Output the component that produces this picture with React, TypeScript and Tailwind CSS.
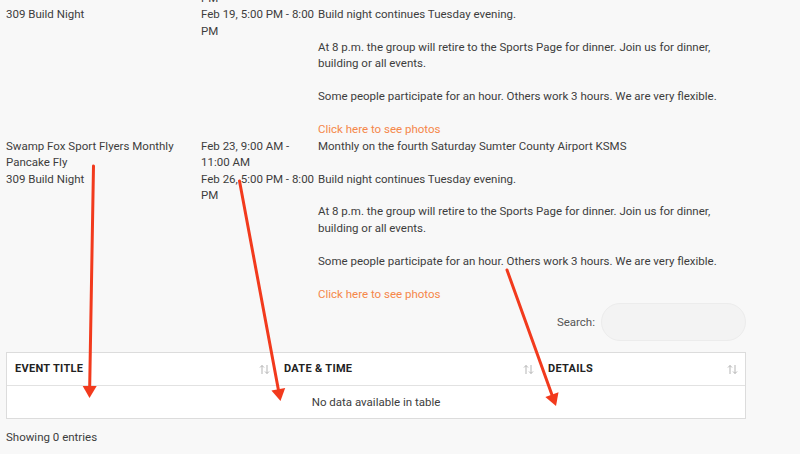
import React from "react";

const font = { fontFamily: "Roboto, 'Noto Sans', sans-serif" };

function SortIcon() {
  return (
    <svg width="11" height="11" viewBox="0 0 11 11" className="shrink-0">
      <g stroke="#b5b5b5" strokeWidth="1" fill="none">
        <path d="M3 10V1.5M1 3.5L3 1.5L5 3.5" />
        <path d="M8 1V9.5M6 7.5L8 9.5L10 7.5" />
      </g>
    </svg>
  );
}

function BuildDetails() {
  return (
    <div>
      <p className="mb-[16.45px]">Build night continues Tuesday evening.</p>
      <p className="mb-[16.45px]">
        At 8 p.m. the group will retire to the Sports Page for dinner. Join us for dinner, building or all events.
      </p>
      <p className="mb-[16.45px]">Some people participate for an hour. Others work 3 hours. We are very flexible.</p>
      <p className="text-[#f5874a]">Click here to see photos</p>
    </div>
  );
}

function Row({ title, date, children }: { title: React.ReactNode; date: React.ReactNode; children?: React.ReactNode }) {
  return (
    <div className="grid grid-cols-[195px_117px_428px]">
      <div>{title}</div>
      <div>{date}</div>
      <div>{children}</div>
    </div>
  );
}

function Arrow({ x1, y1, x2, y2 }: { x1: number; y1: number; x2: number; y2: number }) {
  const dx = x2 - x1;
  const dy = y2 - y1;
  const len = Math.sqrt(dx * dx + dy * dy);
  const ux = dx / len;
  const uy = dy / len;
  const hl = 12;
  const hw = 7;
  const bx = x2 - ux * hl;
  const by = y2 - uy * hl;
  const px = -uy;
  const py = ux;
  return (
    <g>
      <line x1={x1} y1={y1} x2={bx} y2={by} stroke="#f23a1d" strokeWidth="3" strokeLinecap="round" />
      <polygon
        points={`${x2},${y2} ${bx + px * hw},${by + py * hw} ${bx - px * hw},${by - py * hw}`}
        fill="#f23a1d"
      />
    </g>
  );
}

export default function App() {
  return (
    <div className="relative w-[800px] h-[454px] overflow-hidden bg-[#f8f8f8] text-[#3d3d3d] text-[11.5px] leading-[16.45px]" style={font}>
      <div className="px-[6px]">
        <div className="-mt-[10.4px]">
          <Row title="" date="PM" />
          <Row title="309 Build Night" date="Feb 19, 5:00 PM - 8:00 PM">
            <BuildDetails />
          </Row>
          <Row title="Swamp Fox Sport Flyers Monthly Pancake Fly" date="Feb 23, 9:00 AM - 11:00 AM">
            <p>Monthly on the fourth Saturday Sumter County Airport KSMS</p>
          </Row>
          <Row title="309 Build Night" date="Feb 26, 5:00 PM - 8:00 PM">
            <BuildDetails />
          </Row>
        </div>

        <div className="w-[740px] flex justify-end items-center gap-[6px] mt-[1px]">
          <span className="text-[#555]">Search:</span>
          <div className="w-[145px] h-[38px] rounded-full bg-[#f3f3f3] border border-[#ececec]" />
        </div>

        <div className="w-[740px] mt-[11px] bg-white border border-[#dcdcdc]">
          <div className="grid grid-cols-[269px_264px_1fr] h-[33px] items-center border-b border-[#e2e2e2] text-[11px] font-bold text-[#222] tracking-[0.3px]">
            <div className="flex items-center justify-between pl-[8px] pr-[6px]">
              <span>EVENT TITLE</span>
              <SortIcon />
            </div>
            <div className="flex items-center justify-between pl-[8px] pr-[6px]">
              <span>DATE &amp; TIME</span>
              <SortIcon />
            </div>
            <div className="flex items-center justify-between pl-[8px] pr-[7px]">
              <span>DETAILS</span>
              <SortIcon />
            </div>
          </div>
          <div className="h-[32px] flex items-center justify-center">No data available in table</div>
        </div>

        <div className="mt-[10px]">Showing 0 entries</div>
      </div>

      <svg className="absolute inset-0 pointer-events-none" width="800" height="454">
        <Arrow x1={93.5} y1={166} x2={89.5} y2={398} />
        <Arrow x1={239.5} y1={181} x2={280.5} y2={401} />
        <Arrow x1={507} y1={270} x2={556} y2={406} />
      </svg>
    </div>
  );
}
